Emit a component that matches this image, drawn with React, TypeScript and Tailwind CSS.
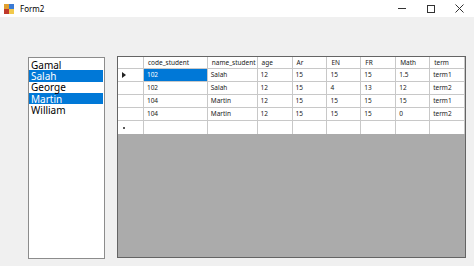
import React from "react"

const cols = ["code_student", "name_student", "age", "Ar", "EN", "FR", "Math", "term"]
const widths = ["w-[64px]", "w-[50px]", "w-[35px]", "w-[35px]", "w-[34px]", "w-[35px]", "w-[34px]", "w-[35px]"]

const rows = [
  ["102", "Salah", "12", "15", "15", "15", "1.5", "term1"],
  ["102", "Salah", "12", "15", "4", "13", "12", "term2"],
  ["104", "Martin", "12", "15", "15", "15", "15", "term1"],
  ["104", "Martin", "12", "15", "15", "15", "0", "term2"],
]

const names = ["Gamal", "Salah", "George", "Martin", "William"]
const selected = ["Salah", "Martin"]

function FormIcon() {
  return (
    <svg width="10" height="10" viewBox="0 0 10 10">
      <rect x="0" y="0" width="5" height="5" fill="#e0a030" />
      <rect x="5" y="0" width="5" height="5" fill="#3a7bd5" />
      <rect x="0" y="5" width="5" height="5" fill="#c0392b" />
      <rect x="5" y="5" width="5" height="5" fill="#f2c94c" />
    </svg>
  )
}

export default function App() {
  return (
    <div className="w-[474px] h-[266px] flex flex-col bg-[#f0f0f0] overflow-hidden" style={{ fontFamily: '"Noto Sans", "Open Sans", sans-serif' }}>
      {/* Title bar */}
      <div className="h-[17px] bg-white flex items-center pl-[4px] text-[8px] text-black">
        <FormIcon />
        <span className="ml-[6px]">Form2</span>
        <div className="ml-auto flex items-center h-full">
          <div className="w-[29px] flex justify-center">
            <div className="w-[8px] h-px bg-[#333]" />
          </div>
          <div className="w-[29px] flex justify-center">
            <div className="w-[8px] h-[8px] border border-[#333]" />
          </div>
          <div className="w-[29px] flex justify-center">
            <svg width="9" height="9" viewBox="0 0 9 9">
              <path d="M0.5 0.5 L8.5 8.5 M8.5 0.5 L0.5 8.5" stroke="#333" strokeWidth="1" />
            </svg>
          </div>
        </div>
      </div>

      <div className="flex items-start pl-[28px] pt-[39px] gap-[12px]">
        {/* ListBox */}
        <div className="mt-[1px] w-[77px] h-[202px] bg-white border border-[#8c8c8c] py-[1px] text-[10px] leading-[10px] text-black">
          {names.map((n) => (
            <div
              key={n}
              className={
                selected.includes(n)
                  ? "h-[11.3px] flex items-center bg-[#0078d7] text-white pl-[2px] mr-[1px]"
                  : "h-[11.3px] flex items-center pl-[2px]"
              }
            >
              {n}
            </div>
          ))}
        </div>

        {/* DataGridView */}
        <div className="w-[349px] h-[202px] bg-[#ababab] border border-[#646464] text-[6.5px] leading-[8px] text-[#222]">
          <div className="flex bg-white h-[12px] border-b border-[#c8c8c8]">
            <div className="w-[26px] border-r border-[#c8c8c8]" />
            {cols.map((c, i) => (
              <div key={c} className={`${widths[i]} border-r border-[#c8c8c8] pl-[4px] flex items-center whitespace-nowrap overflow-hidden`}>
                {c}
              </div>
            ))}
          </div>
          {rows.map((r, ri) => (
            <div key={ri} className="flex bg-white h-[13px] border-b border-[#c8c8c8]">
              <div className="w-[26px] border-r border-[#c8c8c8] flex items-center pl-[4px]">
                {ri === 0 && (
                  <svg width="4" height="6" viewBox="0 0 4 6">
                    <path d="M0 0 L4 3 L0 6 Z" fill="#222" />
                  </svg>
                )}
              </div>
              {r.map((v, ci) => (
                <div
                  key={ci}
                  className={`${widths[ci]} border-r border-[#c8c8c8] pl-[3px] flex items-center whitespace-nowrap ${
                    ri === 0 && ci === 0 ? "bg-[#0078d7] text-white" : ""
                  }`}
                >
                  {v}
                </div>
              ))}
            </div>
          ))}
          <div className="flex bg-white h-[13px]">
            <div className="w-[26px] border-r border-[#c8c8c8] flex items-center pl-[5px]">
              <div className="w-[2px] h-[2px] rounded-full bg-[#222]" />
            </div>
            {cols.map((c, i) => (
              <div key={c} className={`${widths[i]} border-r border-[#c8c8c8]`} />
            ))}
          </div>
        </div>
      </div>
    </div>
  )
}
